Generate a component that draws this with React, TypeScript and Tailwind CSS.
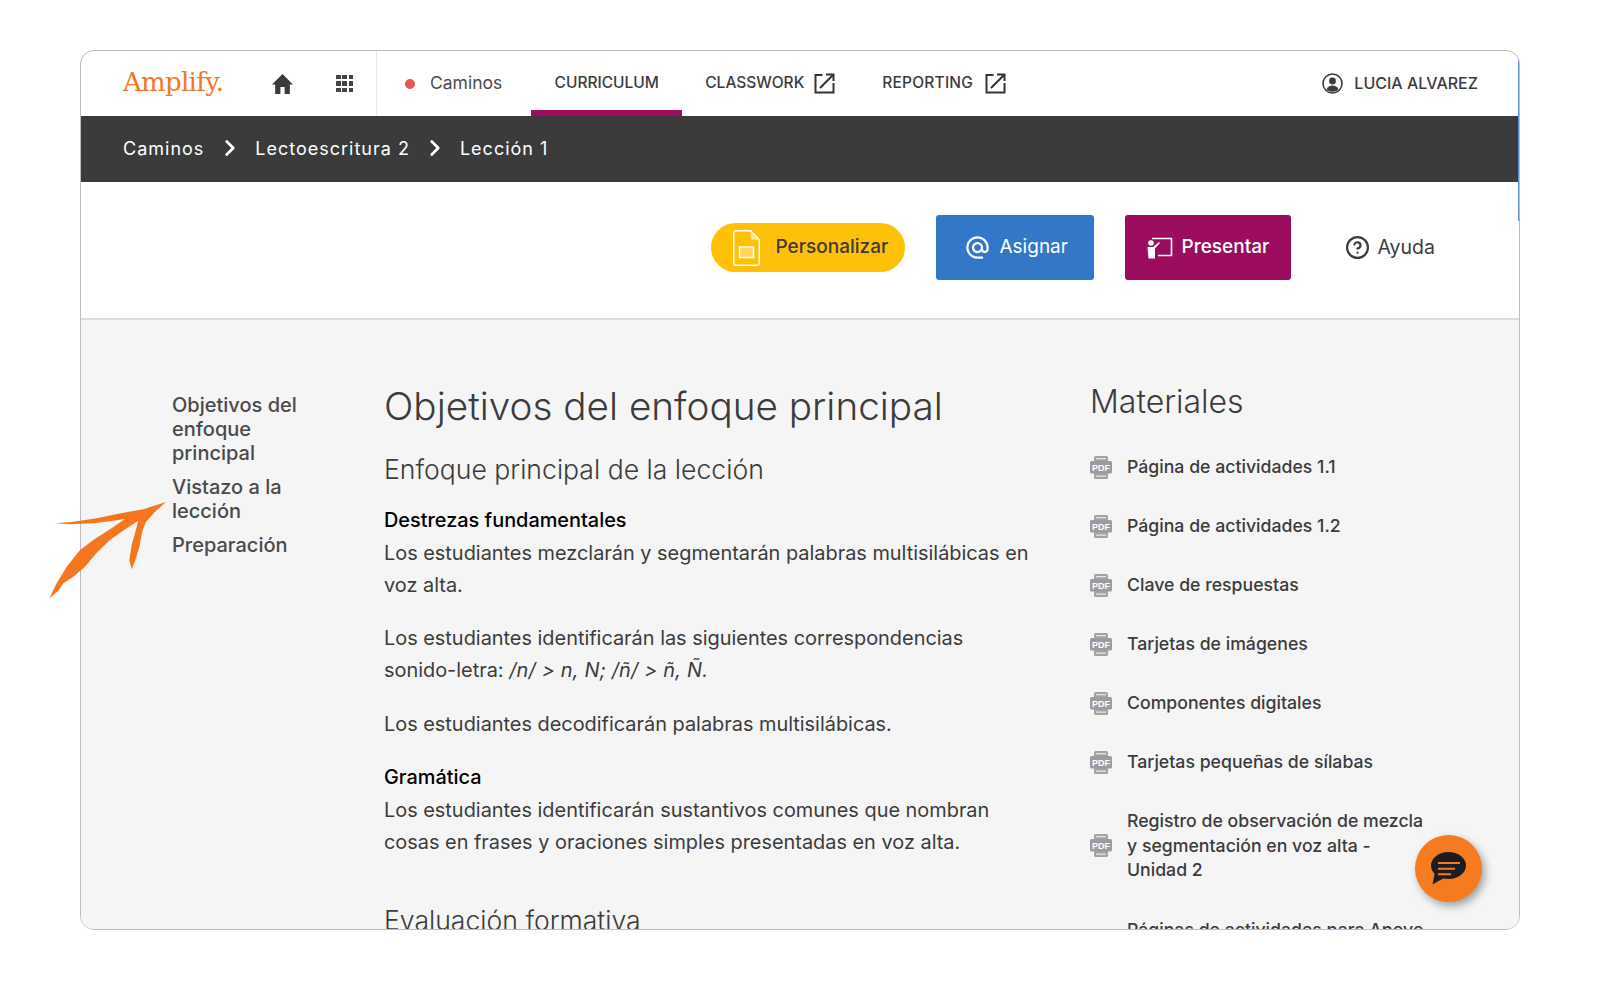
import { ChevronRight, CircleHelp } from "lucide-react";

const materials = [
  "Página de actividades 1.1",
  "Página de actividades 1.2",
  "Clave de respuestas",
  "Tarjetas de imágenes",
  "Componentes digitales",
  "Tarjetas pequeñas de sílabas",
];

function ExternalIcon() {
  return (
    <svg width="21" height="21" viewBox="0 0 21 21" fill="none" stroke="#333" strokeWidth="2">
      <path d="M8.500 2H1.500v17.500H19.500V10" />
      <path d="M6 15 18.500 2.500M12 1.500h7.500V8" />
    </svg>
  );
}

function PdfIcon() {
  return (
    <svg width="22" height="23" viewBox="0 0 22 23" className="shrink-0">
      <rect x="4" y="0" width="14" height="23" rx="1.500" fill="#a3a3a3" />
      <rect x="0" y="5" width="22" height="12.500" rx="1.500" fill="#9c9c9c" />
      <rect x="6" y="2" width="10" height="1.300" fill="#e4e4e4" />
      <rect x="6" y="19.500" width="10" height="1.300" fill="#e4e4e4" />
      <text x="11" y="14.500" textAnchor="middle" fontSize="9" fontWeight="700" fill="#fff" fontFamily="'Liberation Sans', sans-serif">
        PDF
      </text>
    </svg>
  );
}

function Arrow() {
  return (
    <svg
      className="absolute left-[30px] top-[370px] pointer-events-none"
      width="300"
      height="230"
      viewBox="0 0 900 690"
    >
      <path
        fill="#f5761e"
        d="M408 396 340 418 280 428 200 445 130 455 75 460 120 463 190 460 250 452 285 447 240 478 190 510 150 540 110 590 80 640 58 685 85 662 100 640 130 620 165 590 200 548 240 510 290 475 325 452 315 490 305 525 298 570 305 598 318 565 328 530 338 480 348 455 375 425Z"
      />
    </svg>
  );
}

export default function App() {
  return (
    <div className="relative w-[1600px] h-[981px] bg-white overflow-hidden pt-[50px] pl-[80px] font-['Inter',sans-serif] text-[#3c3c3c]">
      <div className="relative w-[1440px] h-[880px] border border-[#bdbdbd] rounded-[14px] overflow-hidden bg-white flex flex-col">
        {/* top nav */}
        <div className="h-[65px] shrink-0 flex items-center">
          <div className="w-[296px] h-full flex items-center border-r border-[#e8e8e8] pl-[42px]">
            <span className="font-['DejaVu_Serif',serif] text-[26px] tracking-[-0.7px] text-[#f5761e] w-[149px] -mt-[2px]">Amplify.</span>
            <svg width="21" height="20" viewBox="2 3 20 17" preserveAspectRatio="none" fill="#3c3c3c">
              <path d="M10 20v-6h4v6h5v-8h3L12 3 2 12h3v8z" />
            </svg>
            <div className="ml-[43px] grid grid-cols-3 gap-[1.800px]">
              {Array.from({ length: 9 }).map((_, i) => (
                <span key={i} className="w-[4.500px] h-[4.500px] bg-[#444]" />
              ))}
            </div>
          </div>
          <span className="ml-[28px] w-[10px] h-[10px] rounded-full bg-[#e05a52]" />
          <span className="ml-[15px] text-[17.500px] text-[#4a4a4a]">Caminos</span>
          <div className="ml-[29px] w-[151px] h-full flex items-center justify-center border-b-[6px] border-[#9c0d5f] pt-[4px] text-[15.500px] font-medium">
            CURRICULUM
          </div>
          <span className="ml-[23px] text-[15.500px] font-medium -mt-[2px]">CLASSWORK</span>
          <span className="ml-[10px]"><ExternalIcon /></span>
          <span className="ml-[47px] text-[15.500px] tracking-[0.2px] font-medium -mt-[2px]">REPORTING</span>
          <span className="ml-[12px]"><ExternalIcon /></span>
          <svg className="ml-auto" width="21" height="21" viewBox="0 0 21 21" fill="none">
            <circle cx="10.500" cy="10.500" r="9.500" stroke="#3c3c3c" strokeWidth="1.600" />
            <circle cx="10.500" cy="8" r="3.400" fill="#3c3c3c" />
            <path d="M4.500 16.500c1-3 3.500-4 6-4s5 1 6 4a9 9 0 0 1-12 0Z" fill="#3c3c3c" />
          </svg>
          <span className="ml-[11px] mr-[41px] text-[16px] font-medium -mt-[2px]">LUCIA ALVAREZ</span>
        </div>

        {/* breadcrumb */}
        <div className="h-[66px] shrink-0 bg-[#3b3b3b] text-white flex items-center pl-[42px] pb-[2px] text-[18px] tracking-[1px]">
          <span>Caminos</span>
          <ChevronRight className="ml-[13px] mr-[12px]" size={26} strokeWidth={2.600} />
          <span>Lectoescritura 2</span>
          <ChevronRight className="ml-[12px] mr-[12px]" size={26} strokeWidth={2.600} />
          <span>Lección 1</span>
        </div>

        {/* action bar */}
        <div className="h-[138px] shrink-0 border-b-2 border-[#dcdcdc] flex items-center justify-end pb-[5px] pr-[84px] text-[19px]">
          <button className="w-[194px] h-[49px] rounded-full bg-[#ffc107] flex items-center pl-[22px] gap-[15px] font-medium text-[#3c3c3c]">
            <svg width="27" height="36" viewBox="0 0 27 36" fill="none" stroke="#fff" strokeWidth="1.500">
              <path d="M17.500 9.750V.75l8.750 9Z" fill="#ffe08a" stroke="none" />
              <path d="M3 .75h14.500l8.750 9V33a2.250 2.250 0 0 1-2.250 2.250H3A2.250 2.250 0 0 1 .75 33V3A2.250 2.250 0 0 1 3 .75Z" />
              <rect x="6.500" y="17" width="14" height="10.500" fill="#ffd65c" />
            </svg>
            Personalizar
          </button>
          <button className="ml-[31px] w-[158px] h-[65px] rounded-[3px] bg-[#3277c8] text-white flex items-center pl-[28px] gap-[8px]">
            <svg width="27" height="27" viewBox="0 0 24 24" fill="#fff">
              <path d="M12 2C6.480 2 2 6.480 2 12s4.480 10 10 10h5v-2h-5c-4.340 0-8-3.660-8-8s3.660-8 8-8 8 3.660 8 8v1.430c0 .79-.71 1.570-1.500 1.570s-1.500-.78-1.500-1.570V12c0-2.760-2.240-5-5-5s-5 2.240-5 5 2.240 5 5 5c1.380 0 2.640-.56 3.540-1.470.65.890 1.770 1.470 2.960 1.470 1.970 0 3.500-1.600 3.500-3.570V12c0-5.520-4.480-10-10-10zm0 13c-1.660 0-3-1.340-3-3s1.340-3 3-3 3 1.340 3 3-1.340 3-3 3z" />
            </svg>
            Asignar
          </button>
          <button className="ml-[31px] w-[166px] h-[65px] rounded-[3px] bg-[#9c0d5f] text-white flex items-center pl-[22px] gap-[8px] font-medium">
            <svg width="26" height="22" viewBox="0 0 26 22" fill="none">
              <path d="M5 1.500h19.500V18.500H11" stroke="#fff" strokeWidth="1.600" />
              <circle cx="4" cy="6" r="2.800" fill="#fff" />
              <path d="M.5 10h5.500L12 5l.9.9L8 11.500V21.500H1.500Z" fill="#fff" />
            </svg>
            Presentar
          </button>
          <CircleHelp className="ml-[54px]" size={25} strokeWidth={2.100} />
          <span className="ml-[7px] text-[19.500px]">Ayuda</span>
        </div>

        {/* content */}
        <div className="relative flex-1 min-h-0 bg-[#f5f5f5] overflow-hidden flex items-start pl-[91px] pt-[62px]">
          <nav className="w-[212px] shrink-0 text-[20px] leading-[24px] font-medium text-[#4a4a4a] flex flex-col gap-[10px] pt-[11px]">
            <a>Objetivos del<br />enfoque<br />principal</a>
            <a>Vistazo a la<br />lección</a>
            <a>Preparación</a>
          </nav>

          <main className="w-[706px] shrink-0 text-[19.900px] leading-[32.500px]">
            <h1 className="text-[38.700px] leading-[48px] font-light">Objetivos del enfoque principal</h1>
            <h2 className="mt-[21px] text-[26.600px] leading-[36px] font-light">Enfoque principal de la lección</h2>
            <h3 className="mt-[17px] font-medium text-black">Destrezas fundamentales</h3>
            <p>Los estudiantes mezclarán y segmentarán palabras multisilábicas en<br />voz alta.</p>
            <p className="mt-[20px]">
              Los estudiantes identificarán las siguientes correspondencias<br />
              sonido-letra: <i className="tracking-[0.2px]">/n/ &gt; n, N; /ñ/ &gt; ñ, Ñ.</i>
            </p>
            <p className="mt-[21px]">Los estudiantes decodificarán palabras multisilábicas.</p>
            <h3 className="mt-[21px] font-medium text-black">Gramática</h3>
            <p>
              Los estudiantes identificarán sustantivos comunes que nombran<br />
              cosas en frases y oraciones simples presentadas en voz alta.
            </p>
            <h2 className="mt-[43px] text-[26.600px] leading-[36px] font-light">Evaluación formativa</h2>
          </main>

          <aside className="w-[340px] shrink-0 text-[17.700px] font-medium text-[#3c3c3c]">
            <h2 className="text-[32px] leading-[40px] font-light">Materiales</h2>
            <ul className="mt-[33px] flex flex-col gap-[34px]">
              {materials.map((m) => (
                <li key={m} className="flex items-center gap-[15px] h-[25px]">
                  <PdfIcon />
                  {m}
                </li>
              ))}
              <li className="flex items-center gap-[15px] leading-[24.500px]">
                <PdfIcon />
                <span>Registro de observación de mezcla<br />y segmentación en voz alta -<br />Unidad 2</span>
              </li>
              <li className="pl-[37px] leading-[25px] whitespace-nowrap">Páginas de actividades para Apoyo</li>
            </ul>
          </aside>

          <button className="absolute left-[1334px] top-[515px] w-[67px] h-[67px] rounded-full bg-[#f47b20] shadow-[3px_4px_8px_rgba(0,0,0,0.35)] flex items-center justify-center">
            <svg width="35" height="33" viewBox="0 0 35 33">
              <ellipse cx="17.500" cy="13.500" rx="17.500" ry="13.500" fill="#1b1d22" />
              <path d="M4 20 1.500 32.500 13 26Z" fill="#1b1d22" />
              <path d="M7 11h22M7 16.700h17M7 22.300h13" stroke="#f47b20" strokeWidth="2" />
            </svg>
          </button>
        </div>

        <span className="absolute right-0 top-0 w-[1.500px] h-[170px] bg-[#5b8ad0]" />
      </div>
      <Arrow />
    </div>
  );
}
